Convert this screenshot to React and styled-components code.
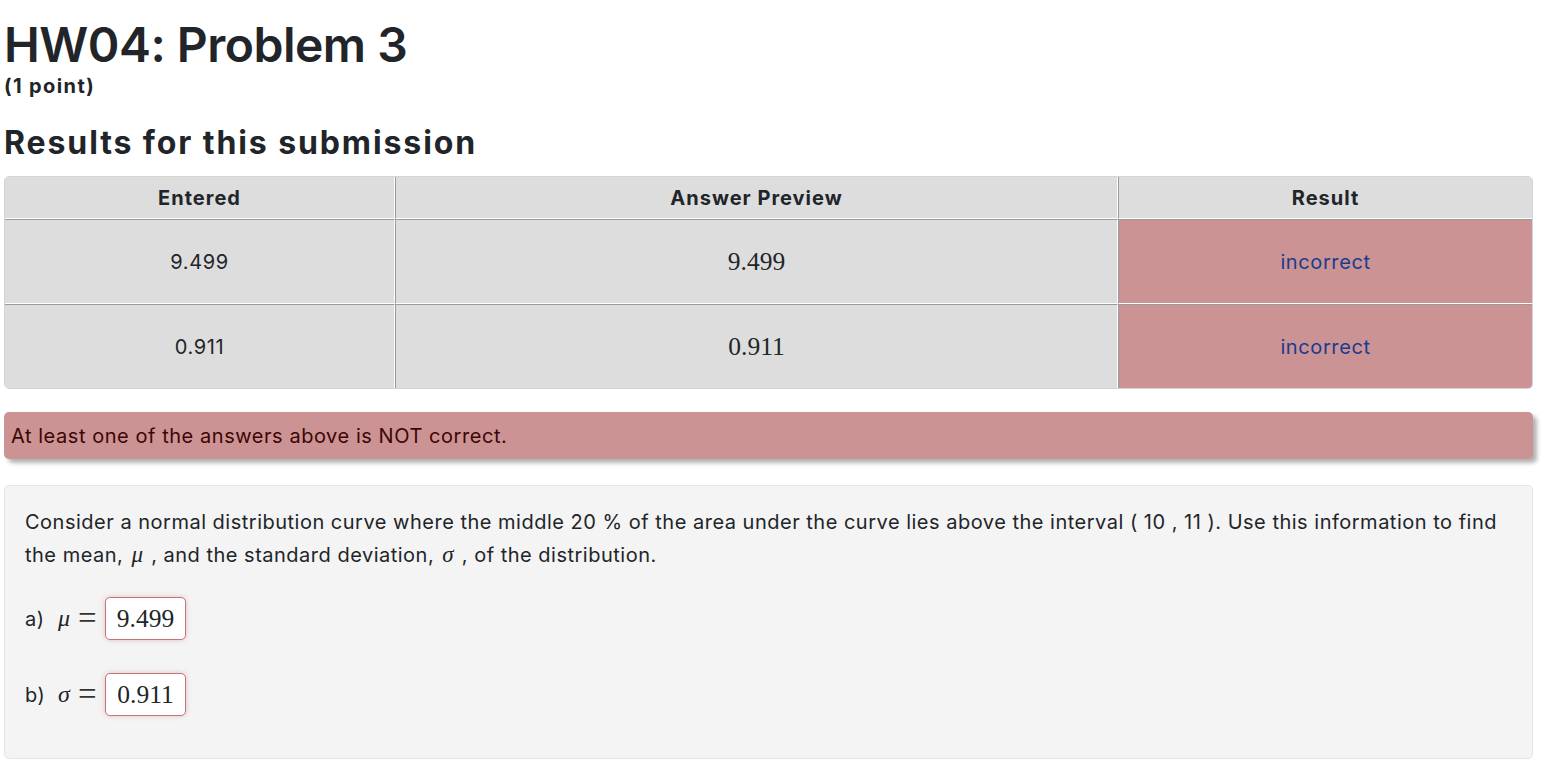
import React from "react";
import styled, { createGlobalStyle } from "styled-components";

const Global = createGlobalStyle`
  html, body { margin: 0; padding: 0; background: #fff; }
  body {
    font-family: Inter, "Noto Sans", "Liberation Sans", sans-serif;
    color: #212529;
  }
`;

const Page = styled.div`
  padding: 0 19px 0 4px;
`;

const Title = styled.h1`
  margin: 0;
  padding-top: 16px;
  font-size: 48px;
  line-height: 58px;
  font-weight: 600;
  letter-spacing: -0.5px;
`;

const Points = styled.div`
  font-size: 20px;
  line-height: 24px;
  font-weight: 700;
  letter-spacing: 1.4px;
`;

const SubTitle = styled.h2`
  margin: 27px 0 0;
  font-size: 32px;
  line-height: 36px;
  font-weight: 700;
  letter-spacing: 1.9px;
`;

const TableWrap = styled.div`
  margin-top: 15px;
  border: 1px solid #d4d4d4;
  border-radius: 5px;
  overflow: hidden;
`;

const Table = styled.table`
  width: 100%;
  border-collapse: separate;
  border-spacing: 0;
  table-layout: fixed;
`;

const Th = styled.th`
  height: 41px;
  padding: 0;
  background: #dddddd;
  font-size: 20px;
  font-weight: 700;
  letter-spacing: 1px;
  text-align: center;
  border-right: 1px solid #fff;
  border-bottom: 1px solid #fff;
  border-left: ${(p) => (p.$first ? "none" : "1px solid #9a9a9a")};
  &:last-child { border-right: none; }
`;

const Td = styled.td`
  height: 83px;
  padding: 0;
  text-align: center;
  background: ${(p) => (p.$bad ? "#cb9393" : "#dddddd")};
  color: ${(p) => (p.$bad ? "#1a3b8f" : "#212529")};
  font-size: ${(p) => (p.$math ? "25.5px" : "20px")};
  letter-spacing: ${(p) => (p.$math ? "0" : "0.6px")};
  font-family: ${(p) =>
    p.$math ? '"Liberation Serif", "DejaVu Serif", serif' : "inherit"};
  border-top: 1px solid #9a9a9a;
  border-right: 1px solid #fff;
  border-bottom: 1px solid #fff;
  border-left: ${(p) => (p.$first ? "none" : "1px solid #9a9a9a")};
  &:last-child { border-right: none; }
  tr:last-child > & { border-bottom: none; }
`;

const Alert = styled.div`
  margin-top: 23px;
  height: 47px;
  display: flex;
  align-items: center;
  padding-left: 7px;
  background: #cb9393;
  color: #3d0606;
  font-size: 20px;
  letter-spacing: 0.55px;
  border-radius: 5px;
  box-shadow: 4px 4px 4px rgba(0, 0, 0, 0.3);
`;

const ProblemBox = styled.div`
  margin-top: 26px;
  height: 274px;
  box-sizing: border-box;
  padding: 20px 20px;
  background: #f4f4f4;
  border: 1px solid #e4e4e4;
  border-radius: 5px;
`;

const Para = styled.p`
  margin: 0;
  font-size: 20px;
  line-height: 33px;
  letter-spacing: 0.5px;
`;

const MathI = styled.span`
  font-family: "Liberation Serif", "DejaVu Serif", serif;
  font-style: italic;
  font-size: 23px;
  line-height: 1;
  letter-spacing: 0;
  padding: 0 2px;
`;

const AnswerRow = styled.div`
  display: flex;
  align-items: center;
  height: 43px;
  margin-top: ${(p) => p.$mt}px;
  font-size: 20px;
  letter-spacing: 0.6px;
`;

const Label = styled.span`
  width: 33px;
`;

const Sym = styled.span`
  font-family: "Liberation Serif", "DejaVu Serif", serif;
  font-style: italic;
  font-size: 24px;
  width: 20px;
`;

const Eq = styled.span`
  font-family: "Liberation Serif", "DejaVu Serif", serif;
  font-size: 33px;
  line-height: 1;
  color: #333;
  width: 27px;
`;

const AnswerInput = styled.div`
  box-sizing: border-box;
  width: 81px;
  height: 43px;
  display: flex;
  align-items: center;
  justify-content: center;
  background: #fff;
  border: 1px solid #c87474;
  border-radius: 5px;
  box-shadow: 0 0 5px rgba(200, 90, 90, 0.35);
  font-family: "Liberation Serif", "DejaVu Serif", serif;
  font-size: 25.5px;
  letter-spacing: 0;
`;

const rows = [
  { entered: "9.499", preview: "9.499" },
  { entered: "0.911", preview: "0.911" },
];

export default function App() {
  return (
    <Page>
      <Global />
      <Title>HW04: Problem 3</Title>
      <Points>(1 point)</Points>
      <SubTitle>Results for this submission</SubTitle>
      <TableWrap>
        <Table>
          <colgroup>
            <col style={{ width: "390px" }} />
            <col style={{ width: "723px" }} />
            <col />
          </colgroup>
          <thead>
            <tr>
              <Th $first>Entered</Th>
              <Th>Answer Preview</Th>
              <Th>Result</Th>
            </tr>
          </thead>
          <tbody>
            {rows.map((r) => (
              <tr key={r.entered}>
                <Td $first>{r.entered}</Td>
                <Td $math>{r.preview}</Td>
                <Td $bad>incorrect</Td>
              </tr>
            ))}
          </tbody>
        </Table>
      </TableWrap>
      <Alert>At least one of the answers above is NOT correct.</Alert>
      <ProblemBox>
        <Para>
          Consider a normal distribution curve where the middle 20 % of the area
          under the curve lies above the interval ( 10 , 11 ). Use this
          information to find the mean, <MathI>μ</MathI> , and the standard
          deviation, <MathI>σ</MathI> , of the distribution.
        </Para>
        <AnswerRow $mt={25}>
          <Label>a)</Label>
          <Sym>μ</Sym>
          <Eq>=</Eq>
          <AnswerInput>9.499</AnswerInput>
        </AnswerRow>
        <AnswerRow $mt={33}>
          <Label>b)</Label>
          <Sym>σ</Sym>
          <Eq>=</Eq>
          <AnswerInput>0.911</AnswerInput>
        </AnswerRow>
      </ProblemBox>
    </Page>
  );
}
